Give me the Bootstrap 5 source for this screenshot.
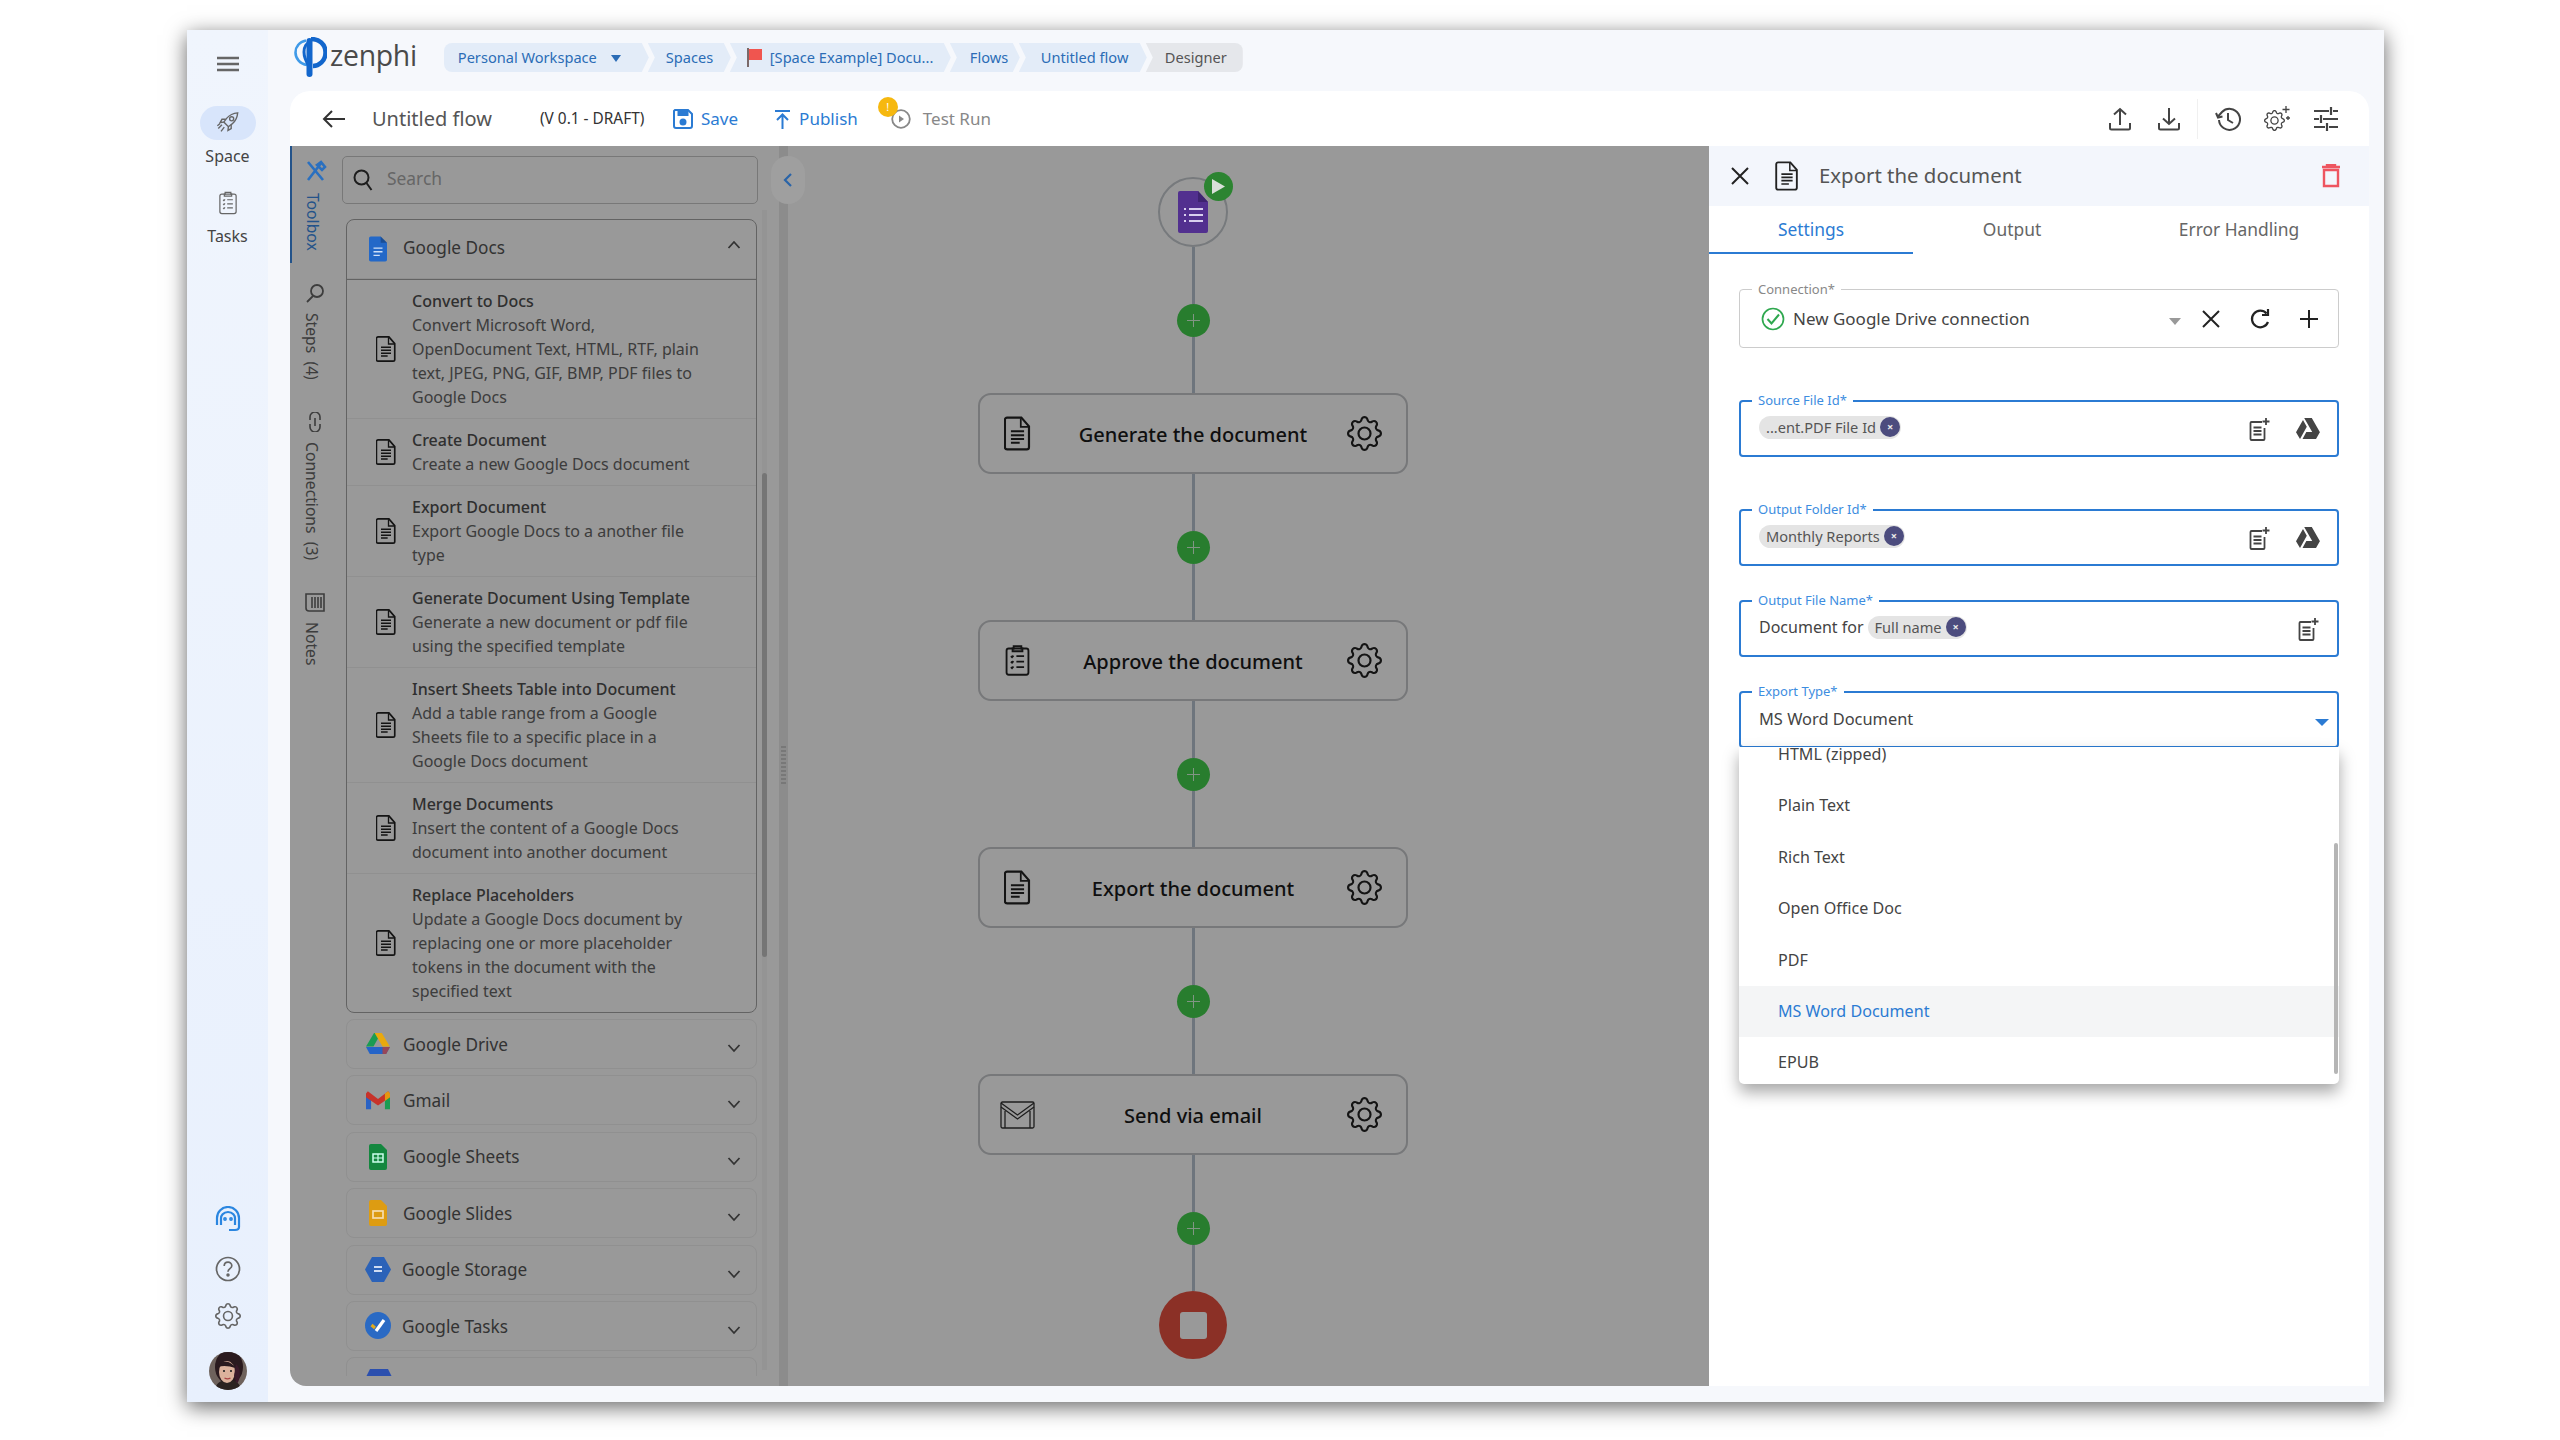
<!doctype html>
<html lang="en"><head><meta charset="utf-8"><title>zenphi</title>
<link href="https://cdn.jsdelivr.net/npm/bootstrap@5.3.0/dist/css/bootstrap.min.css" rel="stylesheet">
<style>
body{font-family:"Noto Sans","Open Sans",sans-serif;background:#fff;color:#444;margin:0}
.shot{height:1440px;width:2560px;padding:30px 176px 38px 187px;overflow:hidden}
.win{height:1372px;box-shadow:0 5px 20px rgba(0,0,0,.6);background:#f6f8fc}
.siderail{width:81px;background:linear-gradient(#f0f5fd,#e8f0fd)}
.railbtn{font-size:16px;color:#444;line-height:20px}
.burger{margin-top:20px;height:18px;color:#666}
.pill{width:56px;height:34px;border-radius:17px;background:#d8e5fb;margin-top:38px;margin-bottom:6px}
.tasksic{margin-top:24px;margin-bottom:10px;height:26px;line-height:0}
.sidelow{margin-top:auto;gap:0}
.sl1{height:50px}.sl2{height:47px}.sl3{height:37px}
.face{width:38px;height:38px;border-radius:50%;overflow:hidden;margin:13px 0 12px}
.mainc{padding:0 15px 16px 22px;min-width:0}
.tophead{height:61px;padding:0 0 6px 4px}
.logotext{font-size:28.4px;color:#4a4a4a;margin-left:3px;line-height:1;font-family:"Open Sans",sans-serif;letter-spacing:-.3px;margin-top:-5px}
.crumbs{margin-left:27px}
.seg{height:29px;background:#e3ecf8;color:#2b6cb6;font-size:14.6px;line-height:29px;white-space:nowrap;margin-right:-1px;clip-path:polygon(0 0,calc(100% - 7px) 0,100% 50%,calc(100% - 7px) 100%,0 100%,7px 50%)}
.seg1{padding:0 32px 0 14px;width:205px;border-radius:8px 0 0 8px;clip-path:polygon(0 0,calc(100% - 7px) 0,100% 50%,calc(100% - 7px) 100%,0 100%)}
.seg2{padding-left:18px;width:83px}.seg3{padding-left:17px;width:221px}.seg4{padding-left:20px;width:70px}.seg5{padding-left:22px;width:128px}
.seg6{padding-left:19px;width:97px;background:#e5e7eb;color:#555;border-radius:0 8px 8px 0;clip-path:polygon(0 0,100% 0,100% 100%,0 100%,7px 50%)}
.caret{width:0;height:0;border-left:5px solid transparent;border-right:5px solid transparent;border-top:7px solid #2b6cb6;display:inline-block;margin-left:14px;vertical-align:1px}
.toolrow{height:55px;background:#fff;border-radius:20px 20px 0 0;padding-left:32px;padding-right:19px;color:#555}
.flowname{font-size:20px;margin-left:26px;width:119px;white-space:nowrap;color:#555}
.ver{font-size:15.4px;color:#333;margin-left:49px;width:106px;white-space:nowrap}
.act{font-size:17px;color:#2b7bd3;white-space:nowrap}
.a1{margin-left:27px}.a2{margin-left:36px}.a3{margin-left:33px}
.act svg{margin-right:8px}
.warn{width:20px;height:20px;border-radius:50%;background:#f6b80f;color:#fff;font-size:11px;line-height:20px;text-align:center;top:-9px;left:-13px}
.tr{color:#888}
.ric{width:49px;text-align:center;color:#444}
.rdiv{width:1px;height:40px;background:#f0f0f0;margin:0 1px 0 4px}
.work{height:1240px}
.leftsec{width:1419px;background:#fff;border-bottom-left-radius:16px;overflow:hidden}
.scrim{left:0;top:0;right:0;bottom:0;background:rgba(0,0,0,.4);z-index:2;pointer-events:none}
.topz{position:relative;z-index:3}
.vrail{width:50px;margin-right:2px;color:#666}
.vtab{padding:20px 0 12px;font-size:15.7px;line-height:20px;color:#666}
.vtab span{writing-mode:vertical-rl;white-space:pre;margin:10px 0 0 -6px}
.vtab.on{border-left:2px solid #3b8be6;color:#3b8be6;padding:14px 0 11px;height:117px}
.vtab.on span{margin-top:11px}
.tbx{width:437px;padding-top:10px;height:1230px;overflow:hidden}
.sfield{width:416px;height:48px;border:1px solid #c8c8c8;border-radius:5px;color:#aaa;font-size:17.4px;padding-left:10px}
.sfield span{margin:-3px 0 0 14px}
.listwrap{padding-left:4px;margin-top:15px;width:415px}
.bbox{border-color:#f0f0f0;border-radius:8px;margin-bottom:6.4px;height:50px;padding-left:19px;padding-right:15px;color:#555;font-size:17.2px;background:#fff}
.bbox .nm{margin-left:13px;margin-top:1px;flex:1}
.bbox.open{height:794px;border-color:#a5a5a5;display:block;padding:0;margin-bottom:6px}
.ohead{height:59px;border-bottom:1px solid #f0f0f0;padding:0 15px 0 22px}
.ohead .nm{margin:-2px 0 0 16px}
.entry{padding:9px 0 9px 29px;font-size:16px;line-height:24px;border-color:#f0f0f0;color:#666;background:transparent}
.entry b{font-weight:500;color:#4f4f4f;display:block}
.entry .tx{margin-left:16px;width:294px}
.sbar{left:420px;top:64px;width:5px;height:1160px;background:#f7f7f7}
.sthumb{left:420px;top:327px;width:5px;height:484px;background:#c4c4c4;border-radius:3px}
.split{width:9px;background:#e9e9e9;height:100%;flex:none}
.grip{top:600px;left:2px;width:5px;height:38px;background:repeating-linear-gradient(#c9c9c9 0 2px,transparent 2px 4px)}
.collapse-dot{width:34px;height:48px;border-radius:17px;left:-8px;top:10px;background:#9f9f9f;z-index:3}
.canvas{padding:31px 111px 0 0;min-width:0}
.startc{width:70px;height:70px;border-radius:50%;border:2px solid #c6cbd0;background:#fff}
.playb{width:29px;height:29px;border-radius:50%;background:#2c8431;top:-7.5px;right:-6.5px;z-index:3}
.conn{height:146px;width:33px}
.conn.last{height:136px}
.wire{width:3px;background:#b8c4d0;flex:1}
.wire.w0{flex:none;height:57px}
.plusb{width:33px;height:33px;border-radius:50%;background:#44d04e;color:#d8f8dc;flex:none}
.node{width:430px;height:81px;border:2px solid #c6c8cb;border-radius:13px;padding:0 24px 0 24px;font-size:20px;font-weight:500;color:#1a1a1a;background:#fff}
.node .lbl{flex:1;text-align:center;margin:2px 0 0 8px}
.stopb{width:68px;height:68px;border-radius:50%;background:#e85040}
.stopb i{display:block;width:27px;height:27px;background:#fff;border-radius:3px}
.propp{width:660px;background:#fff}
.phead{height:60px;background:#f3f6fc;padding:0 29px 0 22px}
.ptitle{font-size:20.4px;color:#555;margin:-2px 0 0 20px;flex:1}
.ptabs{height:48px;font-size:17.4px;color:#666;border:0;flex-wrap:nowrap}
.ptabs .nav-link{padding:0;height:48px;line-height:46px;color:#666;border-radius:0;text-align:center}
.ptabs .nav-link.active{color:#2b7bd3;border-bottom:2px solid #2b7bd3}
.t1{width:204px}.t2{width:198px}.t3{width:256px}
.fields{padding:35px 30px 0}
.fld{border:1px solid #ccc;border-radius:4px;height:59px;padding:0 5px 0 21px;font-size:17px;color:#444}
.fld.act2{border:2px solid #2b7bd3;height:57px;padding:0 5px 0 18px;color:#444;font-size:16.4px}
.fld label{left:12px;top:-10px;background:#fff;padding:0 6px;font-size:13px;line-height:18px;color:#888}
.fld.act2 label{left:11px;top:-11px;color:#3d8de0}
.gap1{margin-bottom:52px}.gap2{margin-bottom:34px}
.chip{height:23px;background:#e4e4e4;border-radius:12px;padding:0 1px 0 7px;font-size:14.6px;color:#555;line-height:23px;white-space:nowrap;margin-top:-3px}
.chip i{width:20px;height:20px;border-radius:50%;background:#4c4c7e;color:#e8e8e8;font-style:normal;font-size:11px;font-weight:700;line-height:19px;text-align:center;margin:1px 0 0 4px;display:block}
.nameword{font-size:16px;margin-top:-3px}
.ib{width:49px;text-align:center;flex:none;color:#444}
.ib svg{display:block;margin:auto}
.ddc{width:0;height:0;border-left:6px solid transparent;border-right:6px solid transparent;border-top:7px solid #999;margin-top:6px;margin-right:5px}
.ddc.blue{border-top-color:#2b7bd3;margin:6px 3px 0 0;border-left-width:7px;border-right-width:7px}
.menuu{display:block;left:-2px;top:54px;width:600px;height:337px;overflow:hidden;border:0;border-radius:0 0 5px 5px;padding:0;margin:0;box-shadow:0 8px 16px rgba(0,0,0,.35);z-index:5}
.menuu .dropdown-item{height:51.4px;padding:0 39px;line-height:51.4px;font-size:16.1px;color:#444}
.menuu .dropdown-item.sel{background:#f4f5f6;color:#2b7bd3}
.menuu .first{margin-top:-18px}
.mthumb{right:1px;top:96px;width:4px;height:231px;background:#b5b5b5;z-index:6;border-radius:2px}
</style></head>
<body>
<svg width="0" height="0" class="position-absolute">
<defs>
<symbol id="doc" viewBox="0 0 24 32"><path d="M2.5 1.5h13l7 8v19a2 2 0 0 1-2 2h-18a2 2 0 0 1-2-2v-25a2 2 0 0 1 2-2z" fill="none" stroke="currentColor" stroke-width="2"/><path d="M15 2v8h7" fill="none" stroke="currentColor" stroke-width="1.6"/><path d="M6 14h12M6 17.5h12M6 21h12M6 24.5h8" stroke="currentColor" stroke-width="1.8" fill="none"/></symbol>
<symbol id="gear" viewBox="0 0 16 16"><path fill="currentColor" d="M8 4.754a3.246 3.246 0 1 0 0 6.492 3.246 3.246 0 0 0 0-6.492zM5.754 8a2.246 2.246 0 1 1 4.492 0 2.246 2.246 0 0 1-4.492 0z"/><path fill="currentColor" d="M9.796 1.343c-.527-1.79-3.065-1.79-3.592 0l-.094.319a.873.873 0 0 1-1.255.52l-.292-.16c-1.64-.892-3.433.902-2.54 2.541l.159.292a.873.873 0 0 1-.52 1.255l-.319.094c-1.79.527-1.79 3.065 0 3.592l.319.094a.873.873 0 0 1 .52 1.255l-.16.292c-.892 1.64.901 3.434 2.541 2.54l.292-.159a.873.873 0 0 1 1.255.52l.094.319c.527 1.79 3.065 1.79 3.592 0l.094-.319a.873.873 0 0 1 1.255-.52l.292.16c1.64.893 3.434-.902 2.54-2.541l-.159-.292a.873.873 0 0 1 .52-1.255l.319-.094c1.79-.527 1.79-3.065 0-3.592l-.319-.094a.873.873 0 0 1-.52-1.255l.16-.292c.893-1.64-.902-3.433-2.541-2.54l-.292.159a.873.873 0 0 1-1.255-.52l-.094-.319zm-2.633.283c.246-.835 1.428-.835 1.674 0l.094.319a1.873 1.873 0 0 0 2.693 1.115l.291-.16c.764-.415 1.6.42 1.184 1.185l-.159.292a1.873 1.873 0 0 0 1.116 2.692l.318.094c.835.246.835 1.428 0 1.674l-.319.094a1.873 1.873 0 0 0-1.115 2.693l.16.291c.415.764-.42 1.6-1.185 1.184l-.291-.159a1.873 1.873 0 0 0-2.693 1.116l-.094.318c-.246.835-1.428.835-1.674 0l-.094-.319a1.873 1.873 0 0 0-2.692-1.115l-.292.16c-.764.415-1.6-.42-1.184-1.185l.159-.291A1.873 1.873 0 0 0 1.945 8.93l-.319-.094c-.835-.246-.835-1.428 0-1.674l.319-.094A1.873 1.873 0 0 0 3.06 4.377l-.16-.292c-.415-.764.42-1.6 1.185-1.184l.292.159a1.873 1.873 0 0 0 2.692-1.115l.094-.319z"/></symbol>
<symbol id="chevd" viewBox="0 0 14 10"><path d="M1.5 2l5.500 6 5.500-6" fill="none" stroke="currentColor" stroke-width="1.8"/></symbol>
<symbol id="noteplus" viewBox="0 0 24 24"><path d="M15 5H4.500a1 1 0 0 0-1 1v16a1 1 0 0 0 1 1h12a1 1 0 0 0 1-1V11" fill="none" stroke="currentColor" stroke-width="1.800"/><path d="M6.500 10.500h8M6.500 14h8M6.500 17.500h8M19 1v7M15.500 4.500h7" stroke="currentColor" stroke-width="1.800" fill="none"/></symbol>
<symbol id="drvm" viewBox="0 0 24 22"><path fill="currentColor" d="M8.200 0h7.600l8 14h-7.600zM7 2l3.800 6.700L4 21 0 14.300zM6.500 21l3.800-7H24l-4 7z"/></symbol>
<symbol id="gdrive" viewBox="0 0 24 22"><path fill="#1a9c52" d="M8 0h7l-7.500 13.500H0z"/><path fill="#e9a90e" d="M8.600 0h7.200l8 13.500h-7.200z"/><path fill="#2564c8" d="M0 14l3.800 7h16.400l3.800-7z"/><path fill="#c73a2a" d="M16.500 14h7.500l-3.800 7h-3.700z" opacity=".7"/></symbol>
<symbol id="ggmail" viewBox="0 0 26 20"><path fill="#2a62c4" d="M0 3v17h5.500V7z"/><path fill="#1a9c52" d="M26 3v17h-5.500V7z"/><path fill="#c7332a" d="M2 .5L13 9 24 .5 26 3v4l-13 9L0 7V3z"/><path fill="#e9a90e" d="M24 .5L26 3v4l-5.500 4V3z" opacity=".85"/></symbol>
<symbol id="pagei" viewBox="0 0 20 28"><path fill="currentColor" d="M2 0h11l7 7v19a2 2 0 0 1-2 2H2a2 2 0 0 1-2-2V2a2 2 0 0 1 2-2z"/><path d="M13 0l7 7h-7z" fill="#000" opacity=".25"/><path d="M5 13h10M5 17h10M5 21h7" stroke="#cfe0f8" stroke-width="1.500"/></symbol>
</defs></svg>

<div class="shot">
<div class="win d-flex">
 <aside class="siderail d-flex flex-column align-items-center flex-none">
  <div class="burger"><svg width="24" height="18" viewBox="0 0 24 18"><path d="M1 3h22M1 9h22M1 15h22" stroke="currentColor" stroke-width="2.400"/></svg></div>
  <div class="pill d-flex align-items-center justify-content-center"><svg width="25" height="24" viewBox="0 0 26 26" fill="none" stroke="#666" stroke-width="1.500"><path d="M24 2c-5 .3-9 2.500-12 6l-3 4 5 5 4-3c3.500-3 5.700-7 6-12z"/><circle cx="17.500" cy="8.500" r="2.200"/><path d="M9 12l-4 .5 2-3.500h4M14 17l-.5 4 3.500-2v-4M7 15l-4 4M9.500 17.500L6 22M5 13.500L2 16"/></svg></div>
  <div class="railbtn">Space</div>
  <div class="tasksic"><svg width="18" height="26" viewBox="0 0 22 32" fill="none" stroke="#666" stroke-width="1.500"><rect x="1" y="5" width="20" height="24" rx="2.500"/><path d="M7.500 5V3h7v2h1v2.500h-9V5z"/><path d="M10 12h7M10 17h7M10 22h7M5 12l1 1 1.300-1.500M5 17l1 1 1.300-1.500M5 22l1 1 1.300-1.500"/></svg></div>
  <div class="railbtn">Tasks</div>
  <div class="sidelow d-flex flex-column align-items-center">
   <div class="sl1"><svg width="26" height="26" viewBox="0 0 26 26" fill="none" stroke="#2b86e0" stroke-width="2.200"><path d="M2 19V12a11 11 0 0 1 22 0v7"/><path d="M6 19v-7c0-2 2-6 7-6s7 4 7 6v7"/><circle cx="10" cy="13" r=".8"/><circle cx="16" cy="13" r=".8"/><path d="M24 19v2c0 2-2 3-4 3h-6"/></svg></div>
   <div class="sl2"><svg width="26" height="26" viewBox="0 0 26 26" fill="none" stroke="#666" stroke-width="1.700"><circle cx="13" cy="13" r="11.500"/><path d="M9.200 10c0-5 7.600-5 7.600-.3 0 3-3.800 3-3.800 6"/><circle cx="13" cy="19" r=".9"/></svg></div>
   <div class="sl3"><svg width="26" height="26" style="color:#666"><use href="#gear"/></svg></div>
   <div class="face"><svg width="38" height="38" viewBox="0 0 38 38"><rect width="38" height="38" fill="#6e625c"/><ellipse cx="20" cy="15" rx="14" ry="17" fill="#2a1a1e"/><path d="M6 38c1-8 7-10 13-10s12 2 13 10z" fill="#2b2320"/><ellipse cx="18" cy="20" rx="8" ry="11" fill="#dcb29c"/><path d="M9 15c2-6 12-8 17 1-5-2-12-3-17-1z" fill="#2a1a1e"/><circle cx="15" cy="19" r="1.100" fill="#222"/><circle cx="22" cy="19" r="1.100" fill="#222"/><path d="M15.500 26c2 1.200 4 1.200 6 0" stroke="#a44" stroke-width="1.200" fill="none"/><path d="M27 12c5 4 5 14 1 20l-3-8z" fill="#3a1a2a"/></svg></div>
  </div>
 </aside>

 <main class="mainc d-flex flex-column flex-grow-1">
  <header class="tophead d-flex align-items-center">
   <svg width="33" height="42" viewBox="0 0 33 42"><path d="M12 3.500C5 5 1.500 10 1.500 15.500S5.500 27 13 28" fill="none" stroke="#3f9ae8" stroke-width="2.600"/><path d="M17 2c8 0 14.500 5 14.500 13.500S25 29 19 29" fill="none" stroke="#1266cc" stroke-width="4.500"/><path d="M15 6c-2 0-5 3-5 9s3 11 5 14" fill="none" stroke="#1266cc" stroke-width="3"/><path d="M15.500 4v33" stroke="#1266cc" stroke-width="6" stroke-linecap="round"/></svg>
   <span class="logotext">zenphi</span>
   <nav class="crumbs d-flex">
    <div class="seg seg1">Personal Workspace<i class="caret"></i></div>
    <div class="seg seg2">Spaces</div>
    <div class="seg seg3 d-flex align-items-center"><svg width="15" height="19" viewBox="0 0 15 19" class="me-2"><rect width="2" height="19" fill="#7a6a6a"/><rect x="2" y="1" width="13" height="11" fill="#f0554f"/></svg>[Space Example] Docu...</div>
    <div class="seg seg4">Flows</div>
    <div class="seg seg5">Untitled flow</div>
    <div class="seg seg6">Designer</div>
   </nav>
  </header>

  <div class="toolrow d-flex align-items-center">
   <svg width="24" height="20" viewBox="0 0 24 20" fill="none" stroke="#333" stroke-width="2"><path d="M23 10H2M10 2l-8 8 8 8"/></svg>
   <div class="flowname">Untitled flow</div>
   <div class="ver">(V 0.1 - DRAFT)</div>
   <div class="act a1 d-flex align-items-center"><svg width="20" height="20" viewBox="0 0 20 20" fill="none" stroke="currentColor" stroke-width="2"><path d="M2 1h13l4 4v12a2 2 0 0 1-2 2H3a2 2 0 0 1-2-2V2z"/><rect x="5.500" y="2" width="9" height="4" fill="currentColor"/><circle cx="10" cy="13" r="2.500" fill="currentColor"/></svg>Save</div>
   <div class="act a2 d-flex align-items-center"><svg width="17" height="20" viewBox="0 0 17 20" fill="none" stroke="currentColor" stroke-width="2"><path d="M1 2h15M8.500 20V6M3 11l5.500-5.500L14 11"/></svg>Publish</div>
   <div class="act a3 tr d-flex align-items-center position-relative"><svg width="20" height="20" viewBox="0 0 20 20" fill="none" stroke="#888" stroke-width="1.800"><circle cx="10" cy="10" r="8.800"/><path d="M8 6.500l5 3.500-5 3.500z" fill="#888" stroke="none"/></svg><span class="warn position-absolute">!</span><span class="ms-1">Test Run</span></div>
   <div class="ms-auto d-flex align-items-center">
    <div class="ric"><svg width="24" height="26" viewBox="0 0 24 26" fill="none" stroke="currentColor" stroke-width="2"><path d="M12 19V3M6 8.500L12 3l6 5.500M2 17v5a1.500 1.500 0 0 0 1.500 1.500h17A1.500 1.500 0 0 0 22 22v-5"/></svg></div>
    <div class="ric"><svg width="24" height="26" viewBox="0 0 24 26" fill="none" stroke="currentColor" stroke-width="2"><path d="M12 2v16M6 12.500L12 18l6-5.500M2 17v5a1.500 1.500 0 0 0 1.500 1.500h17A1.500 1.500 0 0 0 22 22v-5"/></svg></div>
    <div class="rdiv"></div>
    <div class="ric ms-1"><svg width="26" height="26" viewBox="0 0 26 26" fill="none" stroke="currentColor" stroke-width="2"><path d="M4 14a10.500 10.500 0 1 0 3-8l-4 4.500"/><path d="M1 7l2 4.500 4.500-1M13 7v7l5 3"/></svg></div>
    <div class="ric"><svg width="28" height="28" viewBox="0 0 28 28" style="color:#444"><use href="#gear" x="1" y="5" width="21" height="21"/><path d="M23 1v7M19.500 4.500h7M25 11v4M23 13h4" stroke="currentColor" stroke-width="1.300"/></svg></div>
    <div class="ric"><svg width="26" height="24" viewBox="0 0 26 24" fill="none" stroke="currentColor" stroke-width="2.200"><path d="M1 4h15M20 4h5M18 0v8M1 12h5M10 12h15M8 8v8M1 20h11M16 20h9M14 16v8"/></svg></div>
   </div>
  </div>

  <div class="work d-flex">
   <section class="leftsec d-flex position-relative">
    <div class="scrim position-absolute"></div>
    <div class="vrail flex-none">
     <div class="vtab on d-flex flex-column align-items-center"><svg width="22" height="22" viewBox="0 0 22 22" fill="none" stroke="#2a70c0" stroke-width="2.600" class="topz"><path d="M3 2l15 18M17 2L3 20M12 5l4-3 4 5-3 3z"/></svg><span>Toolbox</span></div>
     <div class="vtab d-flex flex-column align-items-center"><svg width="20" height="20" viewBox="0 0 20 20" fill="none" stroke="#666" stroke-width="1.800"><circle cx="12" cy="8" r="6"/><path d="M8 13l-6 6"/></svg><span>Steps  (4)</span></div>
     <div class="vtab d-flex flex-column align-items-center"><svg width="20" height="20" viewBox="0 0 20 20" fill="none" stroke="#666" stroke-width="1.600"><path d="M5 8V5a5 5 0 0 1 10 0v3M5 12v3a5 5 0 0 0 10 0v-3M10 6v8"/></svg><span>Connections  (3)</span></div>
     <div class="vtab d-flex flex-column align-items-center"><svg width="20" height="20" viewBox="0 0 20 20" fill="none" stroke="#666" stroke-width="1.600"><path d="M1 2h18v17H4a3 3 0 0 1-3-3V2zM7 5v11M10 5v11M13 5v11M16 5v11"/></svg><span>Notes</span></div>
    </div>
    <div class="tbx flex-none position-relative">
     <div class="sfield d-flex align-items-center"><svg width="20" height="24" viewBox="0 0 20 24" fill="none" stroke="#333" stroke-width="2"><circle cx="8.500" cy="9.500" r="7"/><path d="M13.500 15l5 7"/></svg><span>Search</span></div>
     <div class="listwrap">
      <div class="card bbox open">
       <div class="ohead d-flex align-items-center"><svg width="18" height="26" class="topz" style="color:#2368c8"><use href="#pagei"/></svg><span class="nm">Google Docs</span><svg width="14" height="10" class="ms-auto mb-2" style="transform:rotate(180deg);color:#555"><use href="#chevd"/></svg></div>
       <div class="list-group list-group-flush">
        <div class="list-group-item entry d-flex align-items-center"><svg width="20" height="28" style="color:#222" class="flex-none"><use href="#doc"/></svg><div class="tx"><b>Convert to Docs</b>Convert Microsoft Word, OpenDocument Text, HTML, RTF, plain text, JPEG, PNG, GIF, BMP, PDF files to Google Docs</div></div>
        <div class="list-group-item entry d-flex align-items-center"><svg width="20" height="28" style="color:#222" class="flex-none"><use href="#doc"/></svg><div class="tx"><b>Create Document</b>Create a new Google Docs document</div></div>
        <div class="list-group-item entry d-flex align-items-center"><svg width="20" height="28" style="color:#222" class="flex-none"><use href="#doc"/></svg><div class="tx"><b>Export Document</b>Export Google Docs to a another file type</div></div>
        <div class="list-group-item entry d-flex align-items-center"><svg width="20" height="28" style="color:#222" class="flex-none"><use href="#doc"/></svg><div class="tx"><b>Generate Document Using Template</b>Generate a new document or pdf file using the specified template</div></div>
        <div class="list-group-item entry d-flex align-items-center"><svg width="20" height="28" style="color:#222" class="flex-none"><use href="#doc"/></svg><div class="tx"><b>Insert Sheets Table into Document</b>Add a table range from a Google Sheets file to a specific place in a Google Docs document</div></div>
        <div class="list-group-item entry d-flex align-items-center"><svg width="20" height="28" style="color:#222" class="flex-none"><use href="#doc"/></svg><div class="tx"><b>Merge Documents</b>Insert the content of a Google Docs document into another document</div></div>
        <div class="list-group-item entry d-flex align-items-center"><svg width="20" height="28" style="color:#222" class="flex-none"><use href="#doc"/></svg><div class="tx"><b>Replace Placeholders</b>Update a Google Docs document by replacing one or more placeholder tokens in the document with the specified text</div></div>
       </div>
      </div>
      <div class="card bbox flex-row align-items-center"><svg width="24" height="22" class="topz"><use href="#gdrive"/></svg><span class="nm">Google Drive</span><svg width="14" height="10" style="color:#555" class="mt-2"><use href="#chevd"/></svg></div>
      <div class="card bbox flex-row align-items-center"><svg width="24" height="20" class="topz"><use href="#ggmail"/></svg><span class="nm">Gmail</span><svg width="14" height="10" style="color:#555" class="mt-2"><use href="#chevd"/></svg></div>
      <div class="card bbox flex-row align-items-center"><svg width="24" height="26" viewBox="0 0 24 26" class="topz"><path fill="#14873f" d="M5 0h10l6 6v18a2 2 0 0 1-2 2H5a2 2 0 0 1-2-2V2a2 2 0 0 1 2-2z"/><rect x="7" y="10" width="10" height="8" fill="none" stroke="#cfe" stroke-width="1.500"/><path d="M12 10v8M7 14h10" stroke="#cfe" stroke-width="1.200"/></svg><span class="nm">Google Sheets</span><svg width="14" height="10" style="color:#555" class="mt-2"><use href="#chevd"/></svg></div>
      <div class="card bbox flex-row align-items-center"><svg width="24" height="26" viewBox="0 0 24 26" class="topz"><path fill="#dd9c12" d="M5 0h10l6 6v18a2 2 0 0 1-2 2H5a2 2 0 0 1-2-2V2a2 2 0 0 1 2-2z"/><rect x="7" y="11" width="10" height="7" fill="none" stroke="#f6ddb0" stroke-width="1.700"/></svg><span class="nm">Google Slides</span><svg width="14" height="10" style="color:#555" class="mt-2"><use href="#chevd"/></svg></div>
      <div class="card bbox flex-row align-items-center"><svg width="26" height="25" viewBox="0 0 26 25" class="topz flex-none" style="margin:0 -2px 0 -1px"><path fill="#2b62b8" d="M7 0h12l7 12.500L19 25H7L0 12.500z"/><path d="M9 10h8M9 14h8" stroke="#cfdcf2" stroke-width="2.200"/></svg><span class="nm">Google Storage</span><svg width="14" height="10" style="color:#555" class="mt-2"><use href="#chevd"/></svg></div>
      <div class="card bbox flex-row align-items-center"><svg width="26" height="27" viewBox="0 0 26 27" class="topz flex-none" style="margin:0 -2px 0 -1px"><ellipse cx="13" cy="13.500" rx="13" ry="13.500" fill="#2a6ac4"/><path d="M11 19L19 8" stroke="#fff" stroke-width="3.200"/><path d="M6.500 13l3.500 3" stroke="#e2ab1c" stroke-width="3"/></svg><span class="nm">Google Tasks</span><svg width="14" height="10" style="color:#555" class="mt-2"><use href="#chevd"/></svg></div>
      <div class="card bbox flex-row align-items-center"><svg width="26" height="26" viewBox="0 0 26 26" class="topz"><path fill="#2b4fae" d="M4 0h18l4 8H0z"/></svg></div>
     </div>
     <div class="sbar position-absolute"></div>
     <div class="sthumb position-absolute"></div>
    </div>
    <div class="split position-relative">
      <div class="grip position-absolute"></div>
      <div class="collapse-dot position-absolute d-flex align-items-center justify-content-center"><svg width="10" height="16" viewBox="0 0 10 16" fill="none" stroke="#2a64a8" stroke-width="2.200"><path d="M8 2L2 8l6 6"/></svg></div>
    </div>
    <div class="canvas flex-grow-1 d-flex flex-column align-items-center">
     <div class="startc d-flex align-items-center justify-content-center position-relative flex-none"><svg width="30" height="42" viewBox="0 0 30 42" class="topz"><path fill="#52308f" d="M2 0h18l10 11v29a2 2 0 0 1-2 2H2a2 2 0 0 1-2-2V2a2 2 0 0 1 2-2z"/><path d="M20 0l10 11H20z" fill="#3e2470"/><path d="M11 18h14M11 24h14M11 30h14" stroke="#d8cfee" stroke-width="2"/><path d="M6 18h2M6 24h2M6 30h2" stroke="#d8cfee" stroke-width="2"/></svg><div class="playb position-absolute d-flex align-items-center justify-content-center"><svg width="14" height="15" viewBox="0 0 14 15"><path d="M1 0l13 7.500L1 15z" fill="#d9dfd9"/></svg></div></div>
     <div class="conn d-flex flex-column align-items-center flex-none"><div class="wire"></div><div class="plusb d-flex align-items-center justify-content-center"><svg width="13" height="13" viewBox="0 0 13 13"><path d="M6.500 0v13M0 6.500h13" stroke="currentColor" stroke-width="1"/></svg></div><div class="wire"></div></div>
     <div class="node d-flex align-items-center flex-none"><svg width="27" height="35" style="color:#222"><use href="#doc"/></svg><span class="lbl">Generate the document</span><svg width="35" height="35" style="color:#222"><use href="#gear"/></svg></div>
     <div class="conn d-flex flex-column align-items-center flex-none"><div class="wire"></div><div class="plusb d-flex align-items-center justify-content-center"><svg width="13" height="13" viewBox="0 0 13 13"><path d="M6.500 0v13M0 6.500h13" stroke="currentColor" stroke-width="1"/></svg></div><div class="wire"></div></div>
     <div class="node d-flex align-items-center flex-none"><svg width="27" height="35" viewBox="0 0 22 32" fill="none" stroke="#222" stroke-width="1.700"><rect x="1" y="5" width="20" height="24" rx="2"/><path d="M7.500 5V3h7v2h1v2.500h-9V5z"/><path d="M10 12h7M10 17h7M10 22h7M5 12l1 1 1.300-1.500M5 17l1 1 1.300-1.500M5 22l1 1 1.300-1.500"/></svg><span class="lbl">Approve the document</span><svg width="35" height="35" style="color:#222"><use href="#gear"/></svg></div>
     <div class="conn d-flex flex-column align-items-center flex-none"><div class="wire"></div><div class="plusb d-flex align-items-center justify-content-center"><svg width="13" height="13" viewBox="0 0 13 13"><path d="M6.500 0v13M0 6.500h13" stroke="currentColor" stroke-width="1"/></svg></div><div class="wire"></div></div>
     <div class="node d-flex align-items-center flex-none"><svg width="27" height="35" style="color:#222"><use href="#doc"/></svg><span class="lbl">Export the document</span><svg width="35" height="35" style="color:#222"><use href="#gear"/></svg></div>
     <div class="conn d-flex flex-column align-items-center flex-none"><div class="wire"></div><div class="plusb d-flex align-items-center justify-content-center"><svg width="13" height="13" viewBox="0 0 13 13"><path d="M6.500 0v13M0 6.500h13" stroke="currentColor" stroke-width="1"/></svg></div><div class="wire"></div></div>
     <div class="node d-flex align-items-center flex-none"><svg width="35" height="28" viewBox="0 0 35 28" fill="none" stroke="#333" stroke-width="1.300" class="flex-none" style="margin-left:-4px;margin-right:-4px"><rect x="1" y="1" width="33" height="26" rx="1.500"/><path d="M1 2l16.500 12L34 2M1 6l16.500 12L34 6M5 27V10M30 27V10"/></svg><span class="lbl">Send via email</span><svg width="35" height="35" style="color:#222"><use href="#gear"/></svg></div>
     <div class="conn last d-flex flex-column align-items-center flex-none"><div class="wire w0"></div><div class="plusb d-flex align-items-center justify-content-center"><svg width="13" height="13" viewBox="0 0 13 13"><path d="M6.500 0v13M0 6.500h13" stroke="currentColor" stroke-width="1"/></svg></div><div class="wire"></div></div>
     <div class="stopb d-flex align-items-center justify-content-center flex-none"><i></i></div>
    </div>
   </section>

   <section class="propp">
    <div class="phead d-flex align-items-center"><svg width="18" height="18" viewBox="0 0 18 18" fill="none" stroke="#222" stroke-width="2"><path d="M1 1l16 16M17 1L1 17"/></svg><svg width="24" height="30" style="color:#222;margin-left:26px"><use href="#doc"/></svg><span class="ptitle">Export the document</span><svg width="18" height="24" viewBox="0 0 18 24" fill="none" stroke="#ee5560" stroke-width="2.400"><path d="M0 3h18M5 3V1h8v2M2 6h14v16H2z"/></svg></div>
    <ul class="nav ptabs"><li class="nav-item"><a class="nav-link active t1" href="#">Settings</a></li><li class="nav-item"><a class="nav-link t2" href="#">Output</a></li><li class="nav-item"><a class="nav-link t3" href="#">Error Handling</a></li></ul>
    <div class="fields">
     <div class="fld position-relative d-flex align-items-center gap1"><label class="position-absolute">Connection*</label><svg width="24" height="24" viewBox="0 0 24 24" fill="none" stroke="#2fa84f" stroke-width="1.700" class="flex-none me-2"><circle cx="12" cy="12" r="10.500"/><path d="M6.500 12l4 4.500 7.500-9" stroke-width="2"/></svg><span>New Google Drive connection</span><i class="ddc ms-auto"></i><div class="ib"><svg width="18" height="18" viewBox="0 0 18 18" fill="none" stroke="#222" stroke-width="2"><path d="M1 1l16 16M17 1L1 17"/></svg></div><div class="ib"><svg width="20" height="22" viewBox="0 0 20 22" fill="none" stroke="#222" stroke-width="2.200"><path d="M18 14a8.300 8.300 0 1 1-1.500-8.500M18 1v6h-6"/></svg></div><div class="ib"><svg width="18" height="18" viewBox="0 0 18 18" stroke="#222" stroke-width="2"><path d="M9 0v18M0 9h18"/></svg></div></div>
     <div class="fld act2 position-relative d-flex align-items-center gap1"><label class="position-absolute">Source File Id*</label><div class="chip d-flex">...ent.PDF File Id<i>×</i></div><div class="ib ms-auto"><svg width="24" height="24"><use href="#noteplus"/></svg></div><div class="ib"><svg width="24" height="22"><use href="#drvm"/></svg></div></div>
     <div class="fld act2 position-relative d-flex align-items-center gap2"><label class="position-absolute">Output Folder Id*</label><div class="chip d-flex">Monthly Reports<i>×</i></div><div class="ib ms-auto"><svg width="24" height="24"><use href="#noteplus"/></svg></div><div class="ib"><svg width="24" height="22"><use href="#drvm"/></svg></div></div>
     <div class="fld act2 position-relative d-flex align-items-center gap2"><label class="position-absolute">Output File Name*</label><span class="me-1 nameword">Document for</span><div class="chip d-flex">Full name<i>×</i></div><div class="ib ms-auto"><svg width="24" height="24"><use href="#noteplus"/></svg></div></div>
     <div class="fld act2 position-relative d-flex align-items-center"><label class="position-absolute">Export Type*</label><span>MS Word Document</span><i class="ddc blue ms-auto"></i>
      <div class="dropdown-menu menuu position-absolute">
       <div class="mthumb position-absolute"></div>
       <a class="dropdown-item first" href="#">HTML (zipped)</a><a class="dropdown-item" href="#">Plain Text</a><a class="dropdown-item" href="#">Rich Text</a><a class="dropdown-item" href="#">Open Office Doc</a><a class="dropdown-item" href="#">PDF</a><a class="dropdown-item sel" href="#">MS Word Document</a><a class="dropdown-item" href="#">EPUB</a>
      </div>
     </div>
    </div>
   </section>
  </div>
 </main>
</div>
</div>
<script src="https://cdn.jsdelivr.net/npm/bootstrap@5.3.0/dist/js/bootstrap.bundle.min.js"></script>
</body></html>
